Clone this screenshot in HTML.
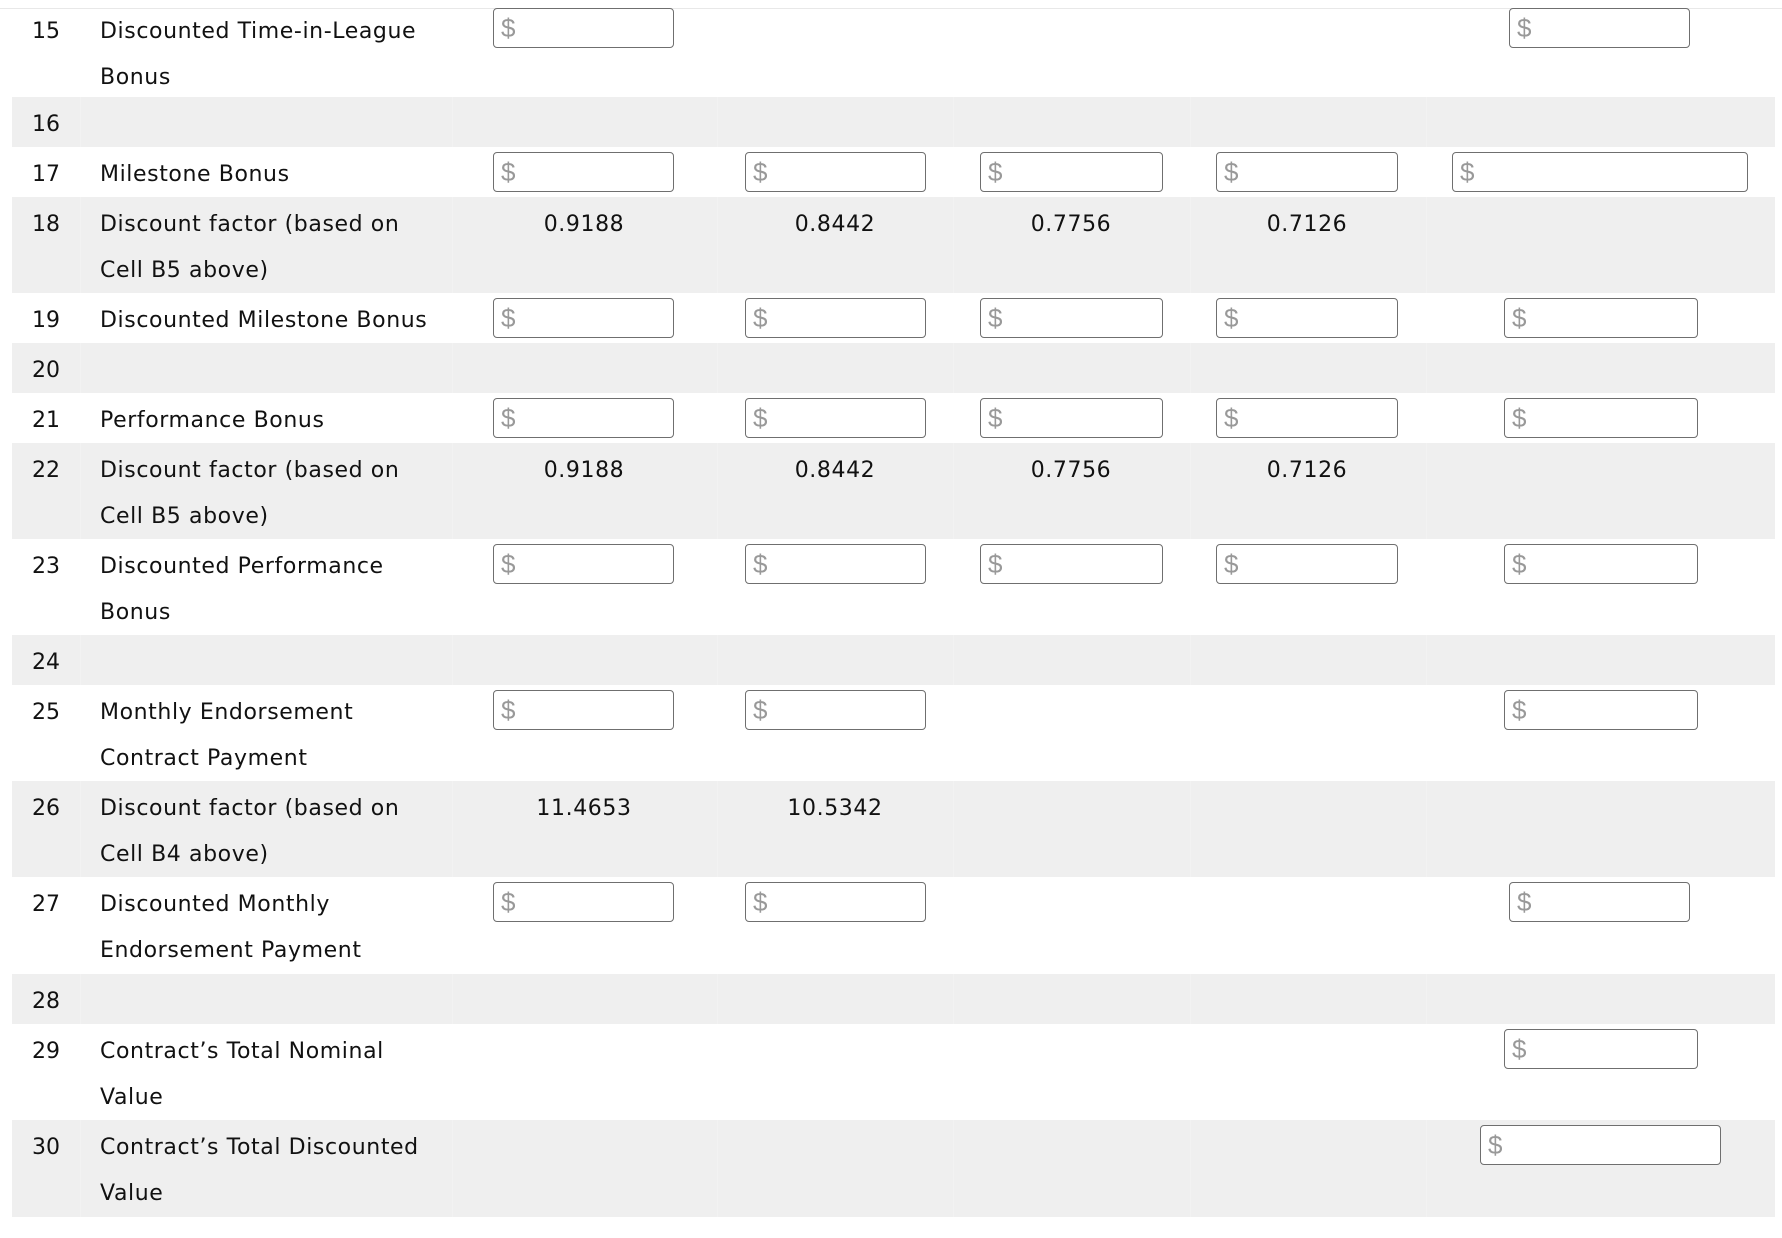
<!DOCTYPE html>
<html><head><meta charset="utf-8"><style>
body{margin:0;width:1782px;height:1238px;background:#fff;position:relative;overflow:hidden;font-family:"DejaVu Sans","Liberation Sans",sans-serif;font-size:22px;color:#111}
.topline{position:absolute;left:0;top:8px;width:1782px;height:1px;background:#e8e8e8}
.g{position:absolute;left:12px;width:1763px;background:#efefef}
.d{position:absolute;width:1px;background:#f2f2f2}
.t{position:absolute;line-height:46px;white-space:nowrap;letter-spacing:0.6px}
.n{left:32px;letter-spacing:0}
.l{left:100px}
.v{text-align:center;width:200px}
.b{position:absolute;height:38px;border:1px solid #6f6f6f;border-radius:4px;background:#fff;box-sizing:content-box}
.b span{position:absolute;left:7px;top:4px;color:#999;font-family:"Liberation Sans",sans-serif;font-size:26px;line-height:30px}
</style></head><body>
<div class="topline"></div>
<div id="c"></div>
<script>
var rows=[
[15,8,89,false,["Discounted Time-in-League","Bonus"],[[0],[1509,1690]]],
[16,97,50,true,[],[]],
[17,147,50,false,["Milestone Bonus"],[[0],[1],[2],[3],[1452,1748]]],
[18,197,96,true,["Discount factor (based on","Cell B5 above)"],null,["0.9188","0.8442","0.7756","0.7126"]],
[19,293,50,false,["Discounted Milestone Bonus"],[[0],[1],[2],[3],[1504,1698]]],
[20,343,50,true,[],[]],
[21,393,50,false,["Performance Bonus"],[[0],[1],[2],[3],[1504,1698]]],
[22,443,96,true,["Discount factor (based on","Cell B5 above)"],null,["0.9188","0.8442","0.7756","0.7126"]],
[23,539,96,false,["Discounted Performance","Bonus"],[[0],[1],[2],[3],[1504,1698]]],
[24,635,50,true,[],[]],
[25,685,96,false,["Monthly Endorsement","Contract Payment"],[[0],[1],[1504,1698]]],
[26,781,96,true,["Discount factor (based on","Cell B4 above)"],null,["11.4653","10.5342"]],
[27,877,97,false,["Discounted Monthly","Endorsement Payment"],[[0],[1],[1509,1690]]],
[28,974,50,true,[],[]],
[29,1024,96,false,["Contract\u2019s Total Nominal","Value"],[[1504,1698]]],
[30,1120,97,true,["Contract\u2019s Total Discounted","Value"],[[1480,1721]]]
];
var cols=[[493,674],[745,926],[980,1163],[1216,1398]];
var centers=[584,835,1071,1307];
var divs=[80,452,717,953,1190,1426];
var h="";
rows.forEach(function(r){
 var top=r[1],ht=r[2];
 if(r[3]){h+='<div class="g" style="top:'+top+'px;height:'+ht+'px"></div>';
  divs.forEach(function(x){h+='<div class="d" style="left:'+x+'px;top:'+top+'px;height:'+ht+'px"></div>';});}
 var ty=top+5; if(r[0]==15) ty=top+1;
 h+='<div class="t n" style="top:'+ty+'px">'+r[0]+'</div>';
 r[4].forEach(function(s,i){h+='<div class="t l" style="top:'+(ty+i*46)+'px">'+s+'</div>';});
 var by=top+5; if(r[0]==15) by=top;
 if(r[5])r[5].forEach(function(b){var x1,x2;if(b.length==1){x1=cols[b[0]][0];x2=cols[b[0]][1];}else{x1=b[0];x2=b[1];}
  h+='<div class="b" style="left:'+x1+'px;top:'+by+'px;width:'+(x2-x1-2)+'px"><span>$</span></div>';});
 if(r[6])r[6].forEach(function(v,i){h+='<div class="t v" style="left:'+(centers[i]-100)+'px;top:'+ty+'px">'+v+'</div>';});
});
document.getElementById("c").innerHTML=h;
</script>
</body></html>
